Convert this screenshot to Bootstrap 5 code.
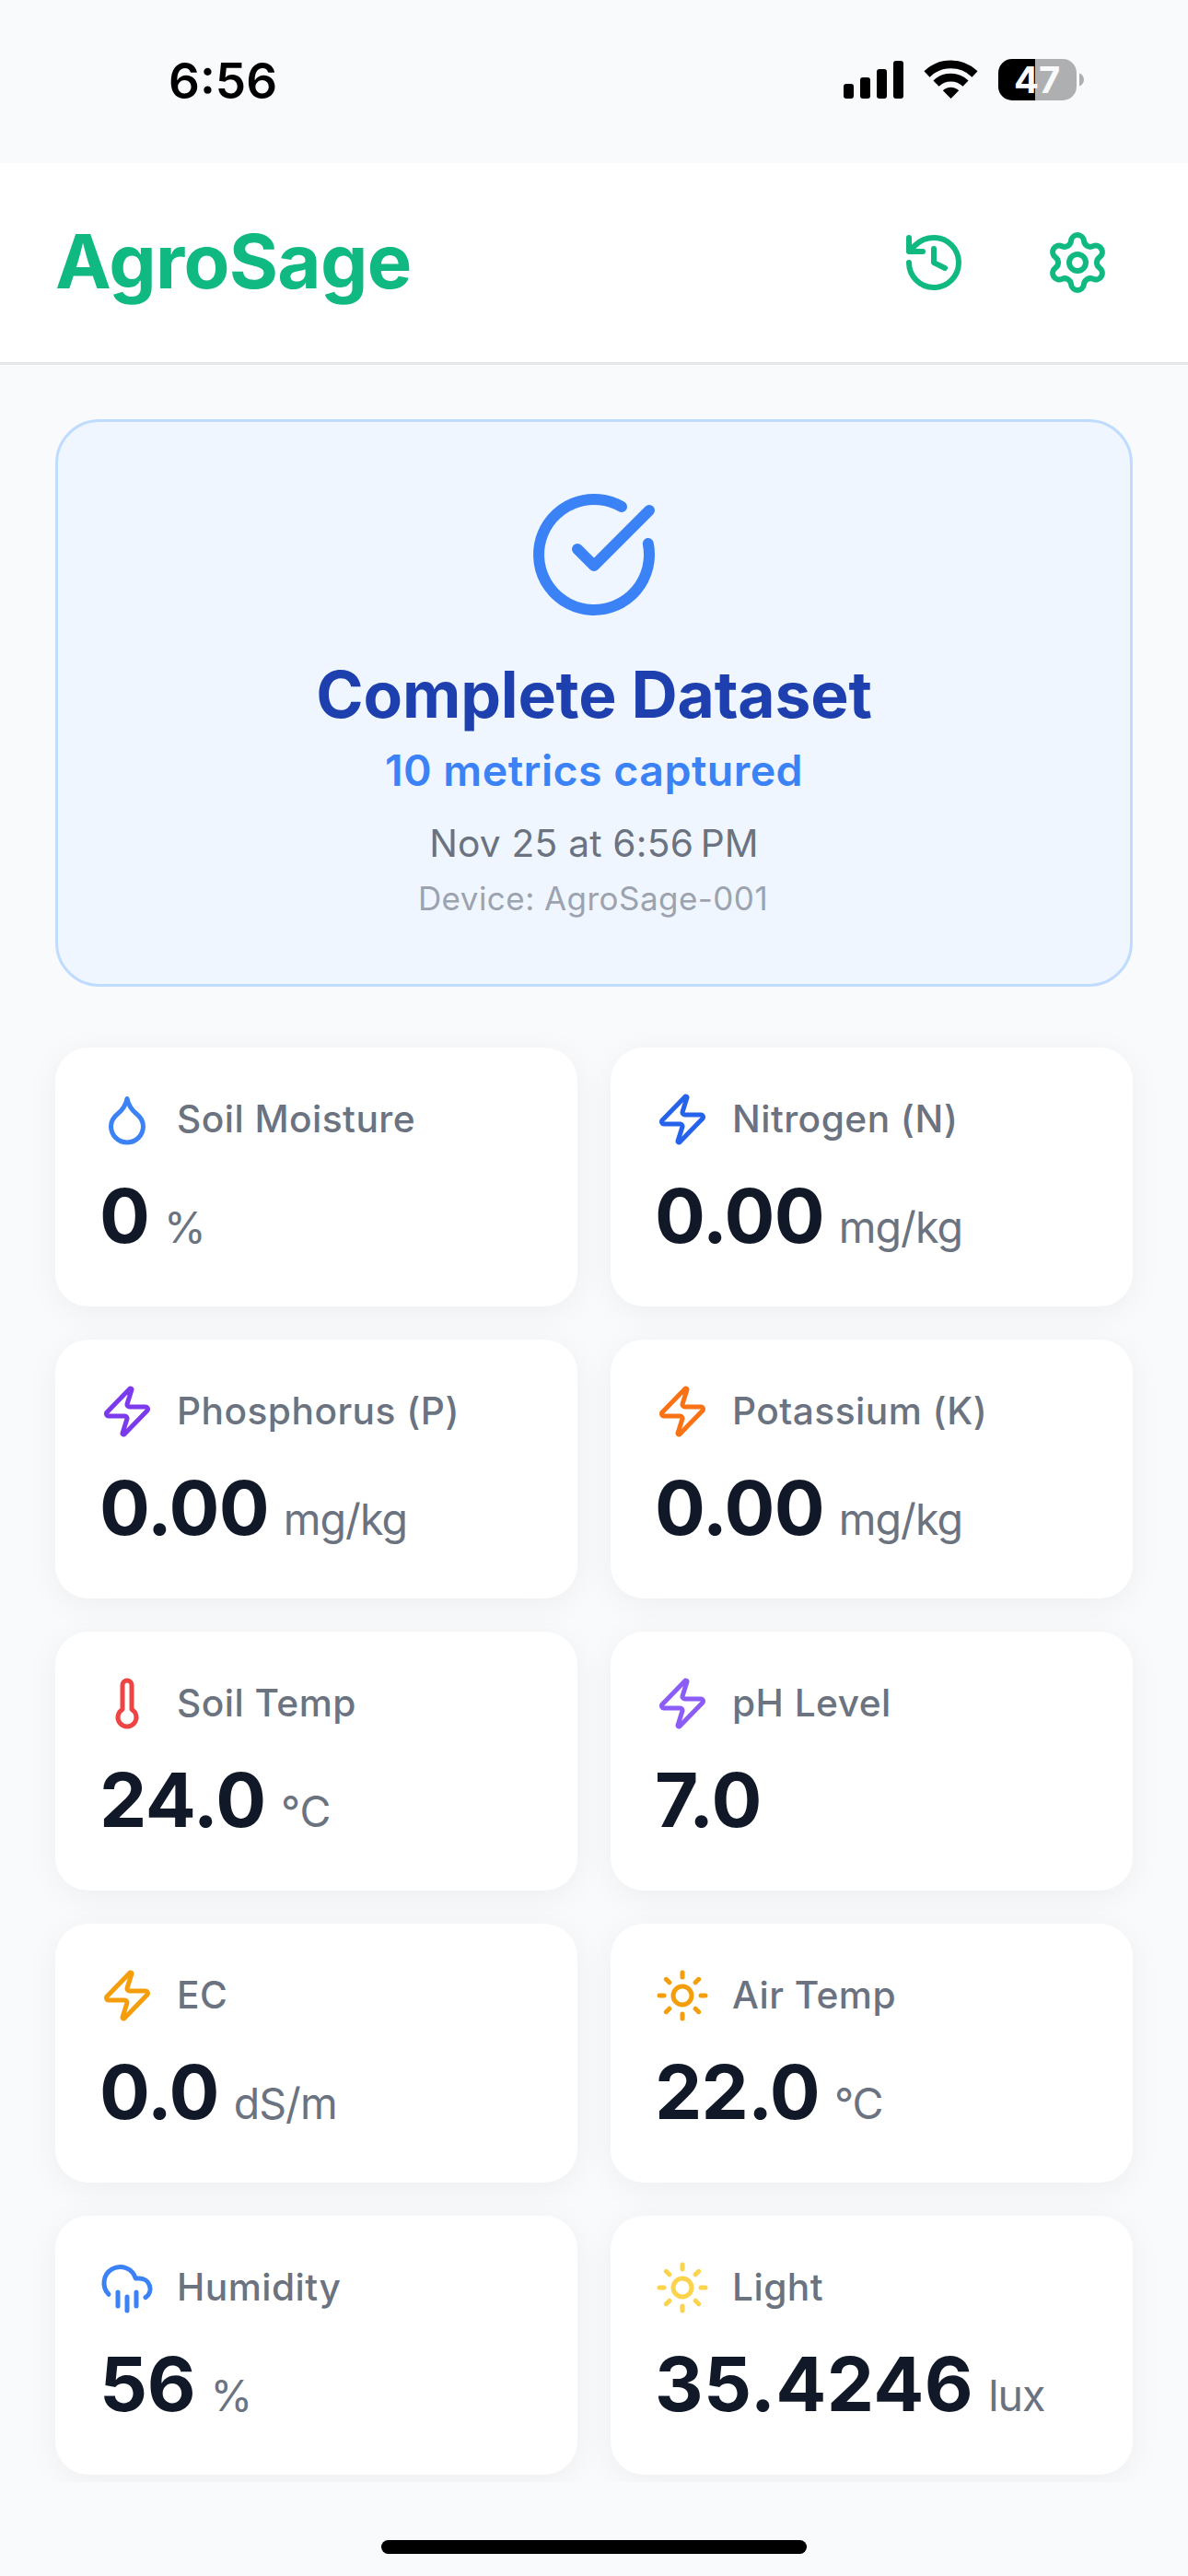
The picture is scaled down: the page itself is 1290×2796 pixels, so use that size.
<!DOCTYPE html>
<html lang="en">
<head>
<meta charset="utf-8">
<meta name="viewport" content="width=device-width, initial-scale=1">
<title>AgroSage</title>
<link href="https://cdn.jsdelivr.net/npm/bootstrap@5.3.0/dist/css/bootstrap.min.css" rel="stylesheet">
<style>
body{width:1290px;height:2796px;background:#f9fafc;font-family:Inter,"Liberation Sans",sans-serif;color:#111827;overflow:hidden}
svg{display:block;flex:none}
.ico{fill:none;stroke:currentColor;stroke-width:2;stroke-linecap:round;stroke-linejoin:round}
.status-bar{height:177px;padding:0 113px 0 183px}
.clock{font-size:53px;font-weight:600;line-height:60px;color:#000;margin-top:58px}
.status-icons{margin-top:60px;overflow:visible}
.app-header{height:219px;border-bottom:3px solid #e5e7eb;padding:0 60px}
.brand{font-size:81.5px;font-weight:700;line-height:100px;letter-spacing:-.009em;color:#10b981;margin-top:-2px}
.tool-btn{padding:24px;color:#10b981;border:0;line-height:1}
.tools{gap:36px}
.content{height:2298px;padding:59px 60px 0;overflow:hidden}
.summary{height:616px;border:3px solid #bfdbfe;border-radius:48px;background:#eff6ff;padding-top:72px;margin-bottom:66px;color:#3b82f6}
.summary-title{font-size:69.5px;font-weight:700;line-height:87px;letter-spacing:-.003em;color:#1e40af;margin:37px 0 10px}
.summary-count{font-size:46.5px;font-weight:600;line-height:57px;letter-spacing:.01em;margin-bottom:25px}
.summary-date{font-size:40.7px;line-height:51px;letter-spacing:.005em;color:#6b7280;margin-bottom:13px}
.summary-device{font-size:35px;line-height:43px;letter-spacing:.013em;color:#9ca3af;padding-right:2px}
.metrics{--bs-gutter-x:36px;--bs-gutter-y:36px}
.metric{height:281px;border:0;border-radius:36px;background:#fff;padding:48px;box-shadow:0 6px 36px rgba(0,0,0,.05)}
.metric-name{font-size:40.7px;font-weight:500;line-height:60px;letter-spacing:.011em;color:#6b7280}
.metric-head{gap:24px;height:60px;margin-bottom:24px}
.metric-value{font-size:81.5px;font-weight:700;line-height:101px;letter-spacing:-.011em;color:#111827;white-space:nowrap}
.metric-value.mid{letter-spacing:-.004em}
.metric-value.long{letter-spacing:.005em}
.unit{font-size:46.5px;font-weight:400;line-height:1;letter-spacing:-.02em;color:#6b7280;margin-left:16px}
.unit.deg{letter-spacing:0}
.home-area{height:102px;padding-top:63px}
.home-bar{width:462px;height:15px;border-radius:8px;background:#000}
.c-blue{color:#3b82f6}.c-royal{color:#2563eb}.c-purple{color:#7c3aed}.c-violet{color:#8b5cf6}
.c-orange{color:#f97316}.c-amber{color:#f59e0b}.c-red{color:#ef4444}.c-yellow{color:#fcd34d}
</style>
</head>
<body>
<svg width="0" height="0" class="position-absolute">
  <symbol id="zap" viewBox="0 0 24 24"><path d="M4 14a1 1 0 0 1-.78-1.63l9.9-10.2a.5.5 0 0 1 .86.46l-1.92 6.02A1 1 0 0 0 13 10h7a1 1 0 0 1 .78 1.63l-9.9 10.2a.5.5 0 0 1-.86-.46l1.92-6.02A1 1 0 0 0 11 14z"/></symbol>
  <symbol id="sun" viewBox="0 0 24 24"><circle cx="12" cy="12" r="4"/><path d="M12 2v2M12 20v2M4.93 4.93l1.41 1.41M17.66 17.66l1.41 1.41M2 12h2M20 12h2M6.34 17.66l-1.41 1.41M19.07 4.93l-1.41 1.41"/></symbol>
  <symbol id="drop" viewBox="0 0 24 24"><path d="M12 22a7 7 0 0 0 7-7c0-2-1-3.9-3-5.5s-3.5-4-4-6.5c-.5 2.5-2 4.9-4 6.5C6 11.1 5 13 5 15a7 7 0 0 0 7 7z"/></symbol>
  <symbol id="thermo" viewBox="0 0 24 24"><path d="M14 4v10.54a4 4 0 1 1-4 0V4a2 2 0 0 1 4 0Z"/></symbol>
  <symbol id="rain" viewBox="0 0 24 24"><path d="M4 14.899A7 7 0 1 1 15.71 8h1.79a4.5 4.5 0 0 1 2.5 8.242M16 14v6M8 14v6M12 16v6"/></symbol>
</svg>

<div class="status-bar d-flex justify-content-between align-items-start">
  <div class="clock">6:56</div>
  <svg class="status-icons" width="261" height="53" viewBox="0 -4 261 53">
    <rect x="0" y="27" width="11" height="16" rx="3"/>
    <rect x="18" y="20" width="11" height="23" rx="3"/>
    <rect x="36" y="11" width="11" height="32" rx="3"/>
    <rect x="54" y="2" width="11" height="41" rx="3"/>
    <g fill="none" stroke="#000" stroke-width="8.8">
      <path d="M90.5 16.5a37.3 37.3 0 0 1 52 0"/>
      <path d="M100.5 26.6a23 23 0 0 1 32 0"/>
    </g>
    <path d="M107.8 34.3a12.4 12.4 0 0 1 17.4 0L116.5 43z"/>
    <path d="M208 0h30a15 15 0 0 1 15 15v15a15 15 0 0 1-15 15h-30z" fill="#aeafb1"/>
    <path d="M208 0h-25a15 15 0 0 0-15 15v15a15 15 0 0 0 15 15h25z"/>
    <path d="M256 15.5c3 1 5 3.700 5 7s-2 6-5 7z" fill="#aeafb1"/>
    <text x="185" y="37" font-size="40" font-weight="700" fill="#f9fafc">47</text>
  </svg>
</div>

<header class="app-header bg-white d-flex justify-content-between align-items-center">
  <div class="brand">AgroSage</div>
  <div class="tools d-flex">
    <button class="tool-btn bg-transparent" type="button" aria-label="History">
      <svg class="ico" width="72" height="72" viewBox="0 0 24 24"><path d="M3 12a9 9 0 1 0 9-9 9.750 9.750 0 0 0-6.740 2.740L3 8M3 3v5h5M12 7v5l4 2"/></svg>
    </button>
    <button class="tool-btn bg-transparent" type="button" aria-label="Settings">
      <svg class="ico" width="72" height="72" viewBox="0 0 24 24"><path d="M9.671 4.136a2.340 2.340 0 0 1 4.659 0 2.340 2.340 0 0 0 3.319 1.915 2.340 2.340 0 0 1 2.330 4.033 2.340 2.340 0 0 0 0 3.831 2.340 2.340 0 0 1-2.330 4.033 2.340 2.340 0 0 0-3.319 1.915 2.340 2.340 0 0 1-4.659 0 2.340 2.340 0 0 0-3.320-1.915 2.340 2.340 0 0 1-2.330-4.033 2.340 2.340 0 0 0 0-3.831A2.340 2.340 0 0 1 6.350 6.051a2.340 2.340 0 0 0 3.319-1.915"/><circle cx="12" cy="12" r="3"/></svg>
    </button>
  </div>
</header>

<main class="content">
  <section class="summary d-flex flex-column align-items-center text-center">
    <svg class="ico" width="144" height="144" viewBox="0 0 24 24"><path d="M21.801 10A10 10 0 1 1 17 3.335"/><path d="m9 11 3 3L22 4"/></svg>
    <h1 class="summary-title">Complete Dataset</h1>
    <div class="summary-count">10 metrics captured</div>
    <div class="summary-date">Nov 25 at 6:56&#8239;PM</div>
    <div class="summary-device">Device: AgroSage-001</div>
  </section>

  <div class="metrics row row-cols-2">
    <div class="col"><div class="metric card">
      <div class="metric-head d-flex align-items-center"><svg class="ico c-blue" width="60" height="60"><use href="#drop"/></svg><span class="metric-name">Soil Moisture</span></div>
      <div class="metric-value">0<span class="unit">%</span></div>
    </div></div>
    <div class="col"><div class="metric card">
      <div class="metric-head d-flex align-items-center"><svg class="ico c-royal" width="60" height="60"><use href="#zap"/></svg><span class="metric-name">Nitrogen (N)</span></div>
      <div class="metric-value">0.00<span class="unit">mg/kg</span></div>
    </div></div>
    <div class="col"><div class="metric card">
      <div class="metric-head d-flex align-items-center"><svg class="ico c-purple" width="60" height="60"><use href="#zap"/></svg><span class="metric-name">Phosphorus (P)</span></div>
      <div class="metric-value">0.00<span class="unit">mg/kg</span></div>
    </div></div>
    <div class="col"><div class="metric card">
      <div class="metric-head d-flex align-items-center"><svg class="ico c-orange" width="60" height="60"><use href="#zap"/></svg><span class="metric-name">Potassium (K)</span></div>
      <div class="metric-value">0.00<span class="unit">mg/kg</span></div>
    </div></div>
    <div class="col"><div class="metric card">
      <div class="metric-head d-flex align-items-center"><svg class="ico c-red" width="60" height="60"><use href="#thermo"/></svg><span class="metric-name">Soil Temp</span></div>
      <div class="metric-value mid">24.0<span class="unit deg">°C</span></div>
    </div></div>
    <div class="col"><div class="metric card">
      <div class="metric-head d-flex align-items-center"><svg class="ico c-violet" width="60" height="60"><use href="#zap"/></svg><span class="metric-name">pH Level</span></div>
      <div class="metric-value mid">7.0</div>
    </div></div>
    <div class="col"><div class="metric card">
      <div class="metric-head d-flex align-items-center"><svg class="ico c-amber" width="60" height="60"><use href="#zap"/></svg><span class="metric-name">EC</span></div>
      <div class="metric-value">0.0<span class="unit">dS/m</span></div>
    </div></div>
    <div class="col"><div class="metric card">
      <div class="metric-head d-flex align-items-center"><svg class="ico c-amber" width="60" height="60"><use href="#sun"/></svg><span class="metric-name">Air Temp</span></div>
      <div class="metric-value">22.0<span class="unit">°C</span></div>
    </div></div>
    <div class="col"><div class="metric card">
      <div class="metric-head d-flex align-items-center"><svg class="ico c-blue" width="60" height="60"><use href="#rain"/></svg><span class="metric-name">Humidity</span></div>
      <div class="metric-value mid">56<span class="unit">%</span></div>
    </div></div>
    <div class="col"><div class="metric card">
      <div class="metric-head d-flex align-items-center"><svg class="ico c-yellow" width="60" height="60"><use href="#sun"/></svg><span class="metric-name">Light</span></div>
      <div class="metric-value long">35.4246<span class="unit">lux</span></div>
    </div></div>
  </div>
</main>

<div class="home-area d-flex justify-content-center"><div class="home-bar"></div></div>
<script src="https://cdn.jsdelivr.net/npm/bootstrap@5.3.0/dist/js/bootstrap.bundle.min.js"></script>
</body>
</html>
